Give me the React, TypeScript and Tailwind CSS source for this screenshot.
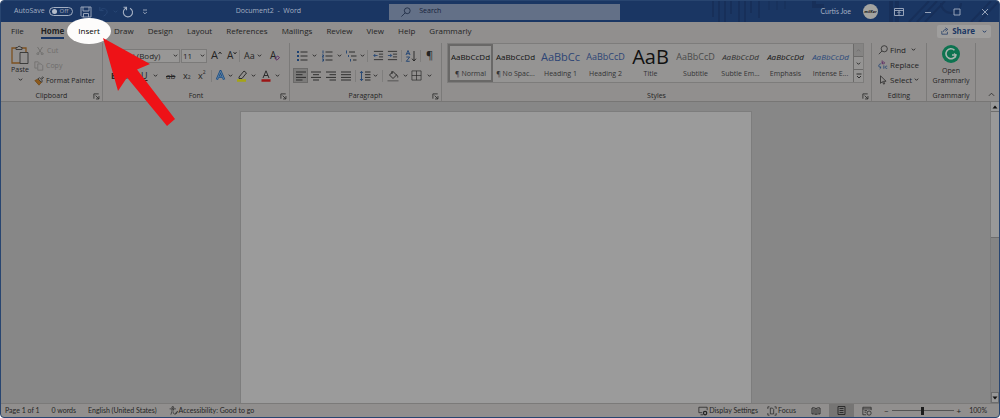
import React from "react";

type IconProps = {
  className?: string;
  box?: string;
  children: React.ReactNode;
};

const Icon: React.FC<IconProps> = ({ className = "size-3", box = "0 0 12 12", children }) => (
  <svg
    viewBox={box}
    className={`shrink-0 ${className}`}
    fill="none"
    stroke="currentColor"
    strokeWidth="0.9"
    aria-hidden="true"
  >
    {children}
  </svg>
);

const Chevron: React.FC<{ className?: string }> = ({ className = "" }) => (
  <Icon className={`size-[5px] ${className}`} box="0 0 6 6">
    <path d="M1 2l2 2 2-2" strokeWidth="1.1" />
  </Icon>
);

type ToolProps = {
  label: string;
  className: string;
  children: React.ReactNode;
};

const Tool: React.FC<ToolProps> = ({ label, className, children }) => (
  <button
    type="button"
    aria-label={label}
    className={`flex h-[15px] shrink-0 items-center ${className}`}
  >
    {children}
  </button>
);

const Divider = () => <span className="h-3 w-px shrink-0 bg-[#7f7e7d]" />;

type GroupProps = {
  name: string;
  className: string;
  launcher?: boolean;
  children: React.ReactNode;
};

const Group: React.FC<GroupProps> = ({ name, className, launcher, children }) => (
  <section className={`flex flex-col border-r border-[#7b7a79] ${className}`}>
    <div className="h-12">{children}</div>
    <div className="relative h-[10px] text-center text-[7px] leading-[10px]">
      {name}
      {launcher && (
        <button type="button" aria-label={`${name} settings`} className="absolute top-[2px] right-[2px]">
          <Icon className="size-[7px]" box="0 0 8 8">
            <path d="M1 6.500V1h5.500M3 3l3.500 3.500M6.800 3.500v3.300H3.500" />
          </Icon>
        </button>
      )}
    </div>
  </section>
);

const tabs = ["Home", "Insert", "Draw", "Design", "Layout", "References", "Mailings", "Review", "View", "Help", "Grammarly"];

const styles = [
  { name: "¶ Normal", sample: "AaBbCcDd", look: "text-[8px] text-[#111]" },
  { name: "¶ No Spac...", sample: "AaBbCcDd", look: "text-[8px] text-[#111]" },
  { name: "Heading 1", sample: "AaBbCc", look: "text-[11px] text-[#2d4475]" },
  { name: "Heading 2", sample: "AaBbCcD", look: "text-[9px] text-[#2d4475]" },
  { name: "Title", sample: "AaB", look: "text-[20px] text-[#111]" },
  { name: "Subtitle", sample: "AaBbCcD", look: "text-[9px] text-[#4a4a4a]" },
  { name: "Subtle Em...", sample: "AaBbCcDd", look: "text-[8px] italic text-[#2d2d2d]" },
  { name: "Emphasis", sample: "AaBbCcDd", look: "text-[8px] italic text-[#111]" },
  { name: "Intense E...", sample: "AaBbCcDd", look: "text-[8px] italic text-[#28477a]" },
];

const TitleBar = () => (
  <header className="relative flex h-[21px] shrink-0 items-center bg-[#1a3663] text-[7px] text-[#a4afc2]">
    <svg
      viewBox="0 0 290 21"
      className="absolute top-0 right-0 h-[21px] w-[290px]"
      fill="none"
      stroke="#172f59"
      strokeWidth="2"
      aria-hidden="true"
    >
      <path d="M4 0v16M10 0v21M16 0v21M22 0v13M30 0v21M36 0v21M42 0v12M50 0v17" />
      <path d="M60 0v9M68 0v9M76 0v8" strokeWidth="1" />
      <path d="M105 0v5h10M182 0v21M188 0v21" strokeWidth="4" />
      <path d="M200 21l20-21M208 21l20-21M216 21l20-21M262 21l20-21M270 21l20-21" />
      <path d="M232 2a10 10 0 0 0 20 0" />
    </svg>
    <div className="flex flex-1 items-center pl-[13px]">
      <label className="flex items-center gap-1">
        AutoSave
        <input type="checkbox" className="peer sr-only" />
        <span className="flex h-[9px] w-6 items-center gap-[3px] rounded-full border border-[#a4afc2] pl-[2px] text-[6px]">
          <span className="size-[5px] rounded-full bg-[#b4bdcb]" />
          Off
        </span>
      </label>
      <button type="button" aria-label="Save" className="ml-[7px]">
        <Icon>
          <path d="M1 1h10v10H2.500L1 9.500zM3 1v4h6V1M3.500 11V7.500h5V11" />
        </Icon>
      </button>
      <button type="button" aria-label="Undo" className="ml-[6px] flex items-center gap-1 text-[#2c4a78]">
        <Icon className="size-[11px]">
          <path d="M2 1v4h4M2 5c3-4 8-2 8 1.500 0 2-2 3.500-4 4.500" />
        </Icon>
        <Chevron />
      </button>
      <button type="button" aria-label="Redo" className="ml-1">
        <Icon>
          <path d="M1.500 1.200h3v3M8 2.200A4.600 4.600 0 1 1 4.300 2" strokeWidth="1.100" />
        </Icon>
      </button>
      <button type="button" aria-label="Customize Quick Access Toolbar" className="ml-2">
        <Icon className="size-[6px]" box="0 0 6 6">
          <path d="M1 1h4M1.200 3l1.800 1.800L4.800 3" />
        </Icon>
      </button>
      <h1 className="mx-auto whitespace-pre">Document2  -  Word</h1>
    </div>
    <label className="relative mr-[4px] flex h-4 w-[23.1%] items-center bg-[#637087] pl-3 text-[#16233c]">
      <Icon className="size-[10px]">
        <circle cx="7.500" cy="4.500" r="3.500" />
        <path d="M5 7l-4.500 4.500" />
      </Icon>
      <input
        type="search"
        aria-label="Search"
        placeholder="Search"
        className="w-full bg-transparent pl-2 text-[7px] outline-none placeholder:text-[#16233c]"
      />
    </label>
    <div className="relative flex flex-1 items-center justify-end">
      <span className="font-['Lato',sans-serif]">Curtis Joe</span>
      <span className="mr-4 ml-3 flex size-[15px] items-center justify-center rounded-full bg-[#a3a3a0] text-[4px] font-bold text-[#16161a] italic">
        milKer
      </span>
      <button type="button" aria-label="Ribbon display options" className="mr-5">
        <Icon className="h-2 w-[10px]" box="0 0 10 8">
          <path d="M.5 .5h9v7h-9zM.5 2.500h9M5 7V3.500M3.500 5L5 3.500 6.500 5" />
        </Icon>
      </button>
      <button type="button" aria-label="Minimize" className="mr-[21px]">
        <Icon className="size-[8px]" box="0 0 8 8">
          <path d="M1 4.500h6" />
        </Icon>
      </button>
      <button type="button" aria-label="Maximize" className="mr-5">
        <Icon className="size-[8px]" box="0 0 8 8">
          <path d="M1 1h6v6H1z" />
        </Icon>
      </button>
      <button type="button" aria-label="Close" className="mr-[10px]">
        <Icon className="size-[8px]" box="0 0 8 8">
          <path d="M1 1l6 6M7 1L1 7" />
        </Icon>
      </button>
    </div>
  </header>
);

const TabRow = () => (
  <nav className="flex h-[21px] shrink-0 items-center pr-[8px] pb-[3px] pl-[10px] text-[8px]">
    <button type="button" className="mr-[17px]">File</button>
    <div className="flex flex-1 items-center gap-[14px]">
      {tabs.map((tab) => {
        if (tab === "Home") {
          return (
            <button key={tab} type="button" className="relative font-bold">
              {tab}
              <span className="absolute inset-x-0 -bottom-[2px] h-[2px] bg-[#1a3663]" />
            </button>
          );
        }
        if (tab === "Insert") {
          return (
            <button key={tab} type="button" className="relative z-10 text-black">
              <span className="absolute -inset-x-[11px] -inset-y-[7px] rounded-[50%] bg-[#fdfcfb]" />
              <span className="relative">{tab}</span>
            </button>
          );
        }
        return (
          <button key={tab} type="button">
            {tab}
          </button>
        );
      })}
    </div>
    <button
      type="button"
      className="flex h-[13px] items-center gap-[3px] rounded-xs bg-[#9f9e9d] px-[4px] font-bold text-[#1a3663]"
    >
      <Icon className="size-[8px]" box="0 0 10 10">
        <path d="M1 5v4h7V6M3 6c0-2 1.500-3 3.500-3M5.500 1l3 2-3 2.300" />
      </Icon>
      Share
      <Chevron className="ml-[4px]" />
    </button>
  </nav>
);

const Clipboard = () => (
  <Group name="Clipboard" className="w-[102px]" launcher>
    <div className="flex pt-[2px] pl-[9px]">
      <button type="button" className="flex w-[20px] flex-col items-center text-[7px] leading-[10px]">
        <Icon className="h-5 w-[18px]" box="0 0 18 20">
          <path d="M5 3H1v15h8M11 3h4v4" stroke="#7d5120" strokeWidth="1.300" />
          <path d="M5 4.500V2.500h1.500a1.800 1.800 0 0 1 3.400 0H11v2z" fill="#8f8e8d" stroke="#333" />
          <path d="M9 7.500h8v11H9z" stroke="#333" />
        </Icon>
        Paste
        <Chevron className="mt-[2px]" />
      </button>
      <div className="flex flex-col gap-[3px] pl-[4px] text-[7px] leading-[12px]">
        <button type="button" className="flex items-center gap-[3px] pl-[2px] text-[#6e6d6c]">
          <Icon className="size-2" box="0 0 8 8">
            <path d="M1.500 0l4 6M6.500 0l-4 6" />
            <circle cx="1.800" cy="6.800" r="1" />
            <circle cx="6.200" cy="6.800" r="1" />
          </Icon>
          Cut
        </button>
        <button type="button" className="flex items-center gap-[2px] text-[#6e6d6c]">
          <Icon className="size-[10px]">
            <path d="M4 8.500H1V1h4l1.500 1.500M4.500 3.500h4l2 2V11h-6z" />
          </Icon>
          Copy
        </button>
        <button type="button" className="flex items-center gap-[2px] whitespace-nowrap">
          <Icon className="size-[10px]">
            <path d="M1 5.500l4-2 4 4-3 3.500z" fill="#8c5a1d" stroke="#71481a" />
            <path d="M5 3.500l1.500-1.500L8 3.500 10.500 1l.8 .8L9 4.500 10 6 9 7.500z" fill="#999" stroke="#222" />
          </Icon>
          Format Painter
        </button>
      </div>
    </div>
  </Group>
);

const Font = () => (
  <Group name="Font" className="w-[187px]" launcher>
    <div className="mt-[5px] flex h-[15px] items-center pl-[7px]">
      <span className="relative flex w-[70px] items-center border border-[#7b7a79] bg-[#989796]">
        <select aria-label="Font" className="h-[12px] w-full appearance-none text-[8px] leading-[12px] outline-none">
          <option>Calibri (Body)</option>
        </select>
        <Chevron className="absolute right-[1px]" />
      </span>
      <span className="relative ml-px flex w-[26px] items-center border border-[#7b7a79] bg-[#989796]">
        <select aria-label="Font size" className="h-[12px] w-full appearance-none pl-[1px] text-[8px] leading-[12px] outline-none">
          <option>11</option>
        </select>
        <Chevron className="absolute right-[1px]" />
      </span>
      <Tool label="Grow font" className="ml-[4px] w-[16px] items-center text-[11px]">
        A<Icon className="mb-[5px] size-[4px]" box="0 0 4 4"><path d="M.5 3L2 1l1.500 2" /></Icon>
      </Tool>
      <Tool label="Shrink font" className="w-[12px] text-[10px]">
        A<Icon className="mb-[5px] size-[4px]" box="0 0 4 4"><path d="M.5 1L2 3l1.500-2" /></Icon>
      </Tool>
      <Divider />
      <Tool label="Change case" className="w-[24px] gap-[2px] pl-[4px] text-[9px]">
        Aa<Chevron />
      </Tool>
      <span className="ml-px"><Divider /></span>
      <Tool label="Clear formatting" className="ml-[5px] text-[10px]">
        A
        <Icon className="mt-[4px] -ml-[2px] size-[6px]" box="0 0 6 6">
          <path d="M1 3.500L3.500 1l2 1.500L3 5.200z" stroke="#5d2563" />
        </Icon>
      </Tool>
    </div>
    <div className="mt-[5px] flex h-[15px] items-center pl-[8px] text-[9px]">
      <Tool label="Bold" className="w-[15px] font-bold">B</Tool>
      <Tool label="Italic" className="w-[15px] italic">I</Tool>
      <Tool label="Underline" className="w-[25px] gap-[5px]"><span className="underline">U</span><Chevron /></Tool>
      <Tool label="Strikethrough" className="w-[17px] text-[8px]"><s>ab</s></Tool>
      <Tool label="Subscript" className="w-[15px]">
        x<span className="mt-[5px] text-[5px]">2</span>
      </Tool>
      <Tool label="Superscript" className="w-[13px]">
        x<span className="mb-[5px] text-[5px]">2</span>
      </Tool>
      <Divider />
      <Tool label="Text effects" className="w-[24px] gap-[2px] pl-[3px]">
        <Icon className="size-[11px]">
          <path d="M2 10.500L6 1.500l4 9M3.500 7.500h5" stroke="#174b82" strokeWidth="2.600" />
          <path d="M2 10.500L6 1.500l4 9M3.500 7.500h5" stroke="#8fa6ba" strokeWidth="0.600" />
        </Icon>
        <Chevron />
      </Tool>
      <Tool label="Highlight color" className="w-[24px] gap-[3px]">
        <Icon className="h-[12px] w-[12px]">
          <path d="M3 7l5-6 2.500 2L6 8.500H3z" />
          <path d="M1 10.500h9" stroke="#a6a414" strokeWidth="2.500" />
        </Icon>
        <Chevron />
      </Tool>
      <Tool label="Font color" className="w-[22px] gap-[3px]">
        <Icon className="h-[12px] w-[12px]">
          <path d="M3 8L6 .8 9 8M4 5.500h4" />
          <path d="M1.500 10.500h9" stroke="#9c1515" strokeWidth="2.500" />
        </Icon>
        <Chevron />
      </Tool>
    </div>
  </Group>
);

const Paragraph = () => (
  <Group name="Paragraph" className="w-[152px]" launcher>
    <div className="mt-[5px] flex h-[15px] items-center pl-[6px]">
      <Tool label="Bullets" className="w-[25px] gap-[4px]">
        <Icon>
          <path d="M4.500 2h7M4.500 6h7M4.500 10h7" />
          <path d="M1 2h2M1 6h2M1 10h2" stroke="#1d4273" strokeWidth="2" />
        </Icon>
        <Chevron />
      </Tool>
      <Tool label="Numbering" className="w-[24px] gap-[4px]">
        <Icon>
          <path d="M4.500 2h7M4.500 6h7M4.500 10h7" />
          <path d="M2 .5v3M1 5h1.500v1L1 7h2M1 9h1.500v2H1" stroke="#1d4273" />
        </Icon>
        <Chevron />
      </Tool>
      <Tool label="Multilevel list" className="w-[22px] gap-[3px]">
        <Icon>
          <path d="M4 2h6M6 6h5.500M8 10h3.500" />
          <path d="M1.500 .5v3M3.500 5v2M5.500 9v2.500" stroke="#1d4273" />
        </Icon>
        <Chevron />
      </Tool>
      <Divider />
      <Tool label="Decrease indent" className="w-[17px] pl-[5px]">
        <Icon className="size-[11px]">
          <path d="M1 1.500h10M6.500 4.500H11M6.500 7.500H11M1 10.500h10" />
          <path d="M5 6H1M2.500 4.300L.9 6l1.600 1.700" stroke="#1d4273" />
        </Icon>
      </Tool>
      <Tool label="Increase indent" className="w-[16px] pl-[2px]">
        <Icon className="size-[11px]">
          <path d="M1 1.500h10M6.500 4.500H11M6.500 7.500H11M1 10.500h10" />
          <path d="M1 6h4M3.500 4.300L5.100 6 3.500 7.700" stroke="#1d4273" />
        </Icon>
      </Tool>
      <Divider />
      <Tool label="Sort" className="w-[18px] pl-[3px]">
        <Icon className="size-3">
          <path d="M1 5l2-4.500L5 5M1.700 3.700h2.600" stroke="#1d4273" />
          <path d="M1.300 7h3.400l-3.400 4.300h3.400" stroke="#1d4273" />
          <path d="M9 1v10M7 8.700L9 11l2-2.300" />
        </Icon>
      </Tool>
      <Divider />
      <Tool label="Show formatting marks" className="pl-[5px] text-[11px]">¶</Tool>
    </div>
    <div className="mt-[5px] flex h-[15px] items-center pl-[3px]">
      <Tool label="Align left" className="mr-[2px] w-[15px] justify-center border border-[#6b6a69] bg-[#7c7b7a]">
        <Icon><path d="M1 2h10M1 4.700h6.500M1 7.400h10M1 10h6.500" /></Icon>
      </Tool>
      <Tool label="Center" className="w-[15px]">
        <Icon><path d="M1 2h10M3 4.700h6M1 7.400h10M3 10h6" /></Icon>
      </Tool>
      <Tool label="Align right" className="w-[15px]">
        <Icon><path d="M1 2h10M4.500 4.700H11M1 7.400h10M4.500 10H11" /></Icon>
      </Tool>
      <Tool label="Justify" className="w-[15px]">
        <Icon><path d="M1 2h10M1 4.700h10M1 7.400h10M1 10h10" /></Icon>
      </Tool>
      <Divider />
      <Tool label="Line spacing" className="w-[26px] gap-[2px] pl-[3px]">
        <Icon>
          <path d="M6 2h5.500M6 4.700h5.500M6 7.400h5.500M6 10h5.500" />
          <path d="M2.500 1.500v9M1 3l1.500-1.700L4 3M1 9l1.500 1.700L4 9" stroke="#1d4273" />
        </Icon>
        <Chevron />
      </Tool>
      <Divider />
      <Tool label="Shading" className="w-[28px] gap-[4px] pl-[4px]">
        <Icon>
          <path d="M2.500 5L6 1.500 9.500 5 6 8.500zM5 1v3M9.500 4.500c1 1.500 1.500 2 1.200 3" />
          <path d="M.5 10.700h11" stroke="#686766" strokeWidth="1.500" />
        </Icon>
        <Chevron />
      </Tool>
      <Tool label="Borders" className="gap-[5px]">
        <Icon className="size-[11px]"><path d="M1 1h10v10H1zM6 1v10M1 6h10" strokeWidth="0.700" /></Icon>
        <Chevron />
      </Tool>
    </div>
  </Group>
);

const StylesGallery = () => (
  <Group name="Styles" className="min-w-0 flex-1" launcher>
    <div className="mr-[7px] ml-[5px] flex h-[40px] border border-[#7d7c7b] bg-[#959493]">
      <div className="grid min-w-0 flex-1 grid-cols-9">
        {styles.map(({ name, sample, look }, index) => (
          <button
            key={name}
            type="button"
            className={`flex min-w-0 flex-col items-center border-2 ${
              index === 0 ? "border-[#696867]" : "border-transparent"
            }`}
          >
            <span className={`flex h-[22px] items-center justify-center leading-[22px] whitespace-nowrap ${look}`}>
              {sample}
            </span>
            <span className="text-[7px] leading-[12px] whitespace-nowrap text-[#333]">{name}</span>
          </button>
        ))}
      </div>
      <div className="flex w-[10px] flex-col divide-y divide-[#6b6a69] border-l border-[#6b6a69]">
        <button type="button" aria-label="Previous styles" className="flex flex-1 items-center justify-center bg-[#858483] text-[#706f6e]">
          <Chevron className="rotate-180" />
        </button>
        <button type="button" aria-label="Next styles" className="flex flex-1 items-center justify-center">
          <Chevron />
        </button>
        <button type="button" aria-label="More styles" className="flex flex-1 items-center justify-center">
          <Icon className="size-[6px]" box="0 0 6 6"><path d="M.5 1h5M1 3l2 2 2-2" /></Icon>
        </button>
      </div>
    </div>
  </Group>
);

const Editing = () => (
  <Group name="Editing" className="w-[55px]">
    <div className="flex flex-col gap-[2px] pl-[6px] text-[8px] leading-[13px]">
      <button type="button" className="flex items-center gap-[2px]">
        <Icon className="size-[10px]">
          <circle cx="7.500" cy="4.500" r="3.700" />
          <path d="M4.800 7.200L1 11" />
        </Icon>
        Find
        <Chevron className="ml-[3px]" />
      </button>
      <button type="button" className="flex items-center gap-[2px]">
        <Icon className="size-[10px]">
          <path d="M5 .5v4.500M5 3.500c0-1.500 3-1.500 3 0s-3 1.500-3 0" stroke="#5d2563" />
          <path d="M3.500 4.500C0 5 0 9 3.500 9M2 7.500L3.700 9 2 10.700M11 7.500c-3-1-3 3.500 0 2.500M7 6.500v4" stroke="#1d4273" />
        </Icon>
        Replace
      </button>
      <button type="button" className="flex items-center gap-[2px]">
        <Icon className="size-[10px]">
          <path d="M3 1v9l2.300-2 1.500 3 1.200-.6L6.700 7.500h3z" />
        </Icon>
        Select
        <Chevron />
      </button>
    </div>
  </Group>
);

const Grammarly = () => (
  <Group name="Grammarly" className="w-[49px]">
    <button type="button" className="flex w-full flex-col items-center pt-[2px] text-[7px] leading-[10px]">
      <Icon className="mb-[3px] size-[18px]" box="0 0 18 18">
        <circle cx="9" cy="9" r="9" fill="#0d7350" stroke="none" />
        <path d="M12.500 5.200A5 5 0 1 0 13.800 10H10" stroke="#a8b5af" strokeWidth="1.600" />
        <path d="M12 8.500l1.800 1.500-.3 2.500" stroke="#a8b5af" strokeWidth="1.200" />
      </Icon>
      Open
      <br />
      Grammarly
    </button>
  </Group>
);

const Workspace = () => (
  <div className="flex min-h-[120px] flex-1 bg-[#878787]">
    <main className="flex flex-1 justify-center pt-[9px]">
      <article aria-label="Document page" className="w-full max-w-[512px] border-x border-t border-[#7d7d7d] bg-[#9b9b9b]" />
    </main>
    <div className="flex w-[9px] flex-col border-l border-[#7b7b7b] bg-[#858585]">
      <button type="button" aria-label="Scroll up" className="flex h-[10px] items-center justify-center border-b border-[#6d6d6d] bg-[#999]">
        <Icon className="size-[6px]" box="0 0 6 6"><path d="M.5 4.500L3 1.500l2.500 3z" fill="#111" stroke="none" /></Icon>
      </button>
      <div className="h-[42%] border-b border-[#6d6d6d] bg-[#999]" />
      <button type="button" aria-label="Scroll down" className="mt-auto flex h-[11px] items-center justify-center border border-[#6d6d6d] bg-[#999]">
        <Icon className="size-[6px]" box="0 0 6 6"><path d="M.5 1.500L3 4.500l2.500-3z" fill="#111" stroke="none" /></Icon>
      </button>
    </div>
  </div>
);

const StatusBar = () => (
  <footer className="flex h-[14px] shrink-0 items-center border-t border-[#7b7a79] pl-[4px] font-['Lato',sans-serif] text-[7px] whitespace-nowrap">
    <span className="mr-[12px]">Page 1 of 1</span>
    <span className="mr-[12px]">0 words</span>
    <span className="mr-[12px]">English (United States)</span>
    <button type="button" className="flex items-center gap-[1px]">
      <Icon className="size-[9px]">
        <circle cx="5" cy="1.800" r="1.200" />
        <path d="M.8 3.800h8.400M4 4v3L2.500 11.500M6 4v2M6 7.500a2.300 2.300 0 1 0 4 0M8 9l1.200 1L12 6.500" />
      </Icon>
      Accessibility: Good to go
    </button>
    <div className="ml-auto flex h-full items-center">
      <button type="button" className="mr-[9px] flex items-center gap-[1px]">
        <Icon className="size-[10px]">
          <path d="M5 8H1V1.500h10V5M3 10.500h3" />
          <circle cx="8.500" cy="8.500" r="2" strokeWidth="1.500" />
        </Icon>
        Display Settings
      </button>
      <button type="button" className="mr-[15px] flex items-center gap-[1px]">
        <Icon className="size-[10px]">
          <path d="M1 3.500V1h2M9 1h2v2.500M1 8.500V11h2M9 11h2V8.500M4 2.500h2.500L8 4v5.500H4z" />
        </Icon>
        Focus
      </button>
      <button type="button" aria-label="Read mode" className="mr-[8px]">
        <Icon className="h-[8px] w-[10px]" box="0 0 10 8">
          <path d="M1 1c1.500-.5 3 0 4 .7C6 1 7.500.5 9 1v6c-1.500-.5-3 0-4 .5C4 7 2.500 6.500 1 7zM5 1.700v5.500M2 3h2M2 5h2M6 3h2M6 5h2" />
        </Icon>
      </button>
      <button type="button" aria-label="Print layout" className="mr-[8px] flex h-full w-[25px] items-center justify-center bg-[#767574]">
        <Icon className="size-[9px]" box="0 0 9 9">
          <path d="M1 .5h7v8H1zM2.500 2.500h4M2.500 4.500h4M2.500 6.500h4" />
        </Icon>
      </button>
      <button type="button" aria-label="Web layout" className="mr-[12px]">
        <Icon className="size-[10px]">
          <path d="M5 10.500H1v-9h10V5M1 3.500h10M3 5.500h3M3 7.500h2" />
          <circle cx="8.500" cy="8.500" r="2.500" />
        </Icon>
      </button>
      <button type="button" aria-label="Zoom out" className="text-[8px]">−</button>
      <input
        type="range"
        aria-label="Zoom"
        defaultValue={50}
        className="mx-[3px] h-[9px] w-[62px] appearance-none bg-[linear-gradient(#555,#555)] bg-[length:100%_1px] bg-center bg-no-repeat [&::-webkit-slider-thumb]:h-[8px] [&::-webkit-slider-thumb]:w-[3px] [&::-webkit-slider-thumb]:appearance-none [&::-webkit-slider-thumb]:bg-[#1c1c1c]"
      />
      <button type="button" aria-label="Zoom in" className="text-[8px]">+</button>
      <span className="mr-[12px] ml-[8px]">100%</span>
    </div>
  </footer>
);

const App: React.FC = () => {
  return (
    <div className="relative flex min-h-screen flex-col overflow-hidden rounded-[4px] border border-[#284570] bg-[#918f8e] font-['Open_Sans','Noto_Sans',sans-serif] text-[#242424]">
      <TitleBar />
      <TabRow />
      <div className="flex h-[59px] shrink-0 border-b border-[#777675]">
        <Clipboard />
        <Font />
        <Paragraph />
        <StylesGallery />
        <Editing />
        <Grammarly />
        <div className="flex w-[23px] items-end justify-end pr-[4px] pb-[3px]">
          <button type="button" aria-label="Collapse the ribbon">
            <Icon className="size-[7px]" box="0 0 8 8"><path d="M1 5.500l3-3 3 3" /></Icon>
          </button>
        </div>
      </div>
      <Workspace />
      <StatusBar />
      {/* pointer towards the Insert tab */}
      <svg
        viewBox="0 0 72 89"
        className="pointer-events-none absolute top-[37px] left-[102px] z-20 h-[89px] w-[72px]"
        aria-hidden="true"
      >
        <path d="M0 0L47 26 34 31.500 72 81 64 88 24 39.500 15 53z" fill="#ee1217" />
      </svg>
    </div>
  );
};

export default App;
